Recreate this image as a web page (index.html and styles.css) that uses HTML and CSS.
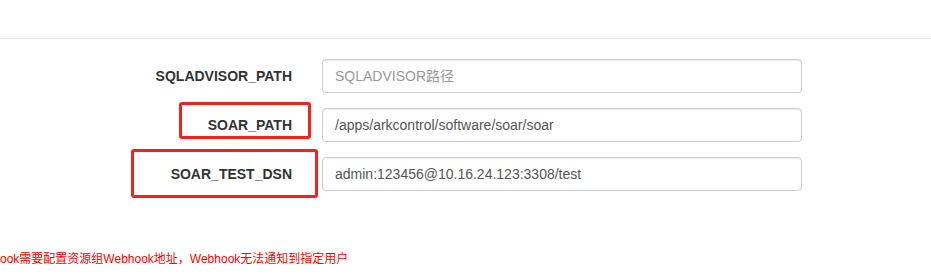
FILE: index.html
```html
<!DOCTYPE html>
<html lang="en">

<head>
    <meta charset="UTF-8">
    <meta name="viewport" content="width=device-width, initial-scale=1.0">
    <title>SOAR Settings</title>
    <link rel="stylesheet" href="styles.css">
</head>

<body>
    <div class="modal-header"></div>

    <form class="form-horizontal">
        <div class="form-group">
            <label class="control-label" for="sqladvisor">SQLADVISOR_PATH</label>
            <input type="text" class="form-control" id="sqladvisor" placeholder="SQLADVISOR路径">
        </div>
        <div class="form-group">
            <span class="mark mark-path"></span>
            <label class="control-label" for="soar_path">SOAR_PATH</label>
            <input type="text" class="form-control" id="soar_path" value="/apps/arkcontrol/software/soar/soar">
        </div>
        <div class="form-group">
            <span class="mark mark-dsn"></span>
            <label class="control-label" for="soar_dsn">SOAR_TEST_DSN</label>
            <input type="text" class="form-control" id="soar_dsn" value="admin:123456@10.16.24.123:3308/test">
        </div>
    </form>

    <p class="help-warning">ook需要配置资源组Webhook地址，Webhook无法通知到指定用户</p>
</body>

</html>
```

FILE: styles.css
```css
body {
    margin: 0;
    background: #ffffff;
    font-family: "Liberation Sans", Arial, "Noto Sans CJK SC", sans-serif;
    font-size: 14px;
    line-height: 20px;
    color: #333;
}

.modal-header {
    height: 38px;
    border-bottom: 1px solid #e5e5e5;
}

.form-horizontal {
    padding-top: 20px;
}

.form-group {
    position: relative;
    display: flex;
    margin-bottom: 15px;
}

.control-label {
    width: 292px;
    padding-top: 7px;
    text-align: right;
    font-weight: bold;
    color: #333;
}

.form-control {
    box-sizing: border-box;
    width: 480px;
    height: 34px;
    margin-left: 30px;
    padding: 6px 12px;
    font-family: inherit;
    font-size: 14px;
    color: #555;
    background: #fff;
    border: 1px solid #ccc;
    border-radius: 4px;
    box-shadow: inset 0 1px 1px rgba(0, 0, 0, 0.075);
    outline: none;
}

.form-control::placeholder {
    color: #999;
}

/* red annotation boxes */

.mark {
    position: absolute;
    box-sizing: border-box;
    border: 3px solid #f5221b;
    border-radius: 3px;
}

.mark-path {
    left: 179px;
    top: -6px;
    width: 132px;
    height: 37px;
}

.mark-dsn {
    left: 131px;
    top: -8px;
    width: 187px;
    height: 49px;
}

.help-warning {
    margin: 60px 0 0;
    font-size: 12px;
    line-height: 17px;
    color: #ff0000;
    white-space: nowrap;
}
```
